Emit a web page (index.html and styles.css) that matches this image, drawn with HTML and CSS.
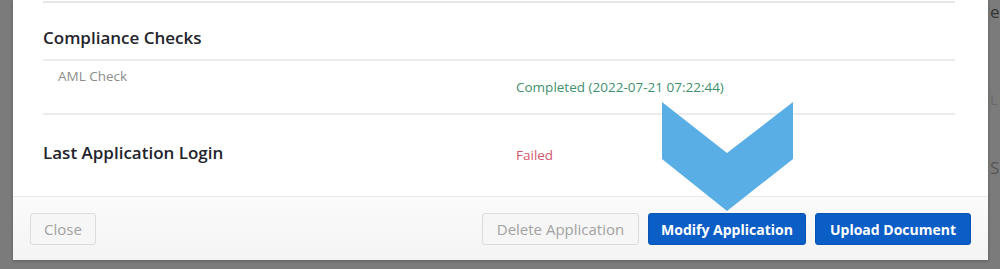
FILE: index.html
```html
<!DOCTYPE html>
<html>
<head>
<meta charset="utf-8">
<link rel="stylesheet" href="styles.css">
</head>
<body>
<div class="screen">
  <div class="side side-left"></div>
  <div class="modal">
    <div class="modal-body">
      <div class="top-rule"></div>
      <div class="section-head">Compliance Checks</div>
      <div class="row check-row">
        <div class="check-label">AML Check</div>
        <div class="check-value ok">Completed (2022-07-21 07:22:44)</div>
      </div>
      <div class="row login-row">
        <div class="section-title">Last Application Login</div>
        <div class="login-value fail">Failed</div>
      </div>
    </div>
    <div class="modal-footer">
      <button class="btn btn-light btn-close">Close</button>
      <div class="footer-right">
        <button class="btn btn-light btn-delete">Delete Application</button>
        <button class="btn btn-primary btn-modify">Modify Application</button>
        <button class="btn btn-primary btn-upload">Upload Document</button>
      </div>
    </div>
    <svg class="arrow" width="132" height="110" viewBox="0 0 132 110">
      <polygon points="0,0 65,51 131,0 131,57 65,109 0,57" fill="#5aaee6"/>
    </svg>
  </div>
  <div class="side side-right">
    <div class="ghost g1">e</div>
    <div class="ghost g2">L</div>
    <div class="ghost g3">S</div>
  </div>
</div>
</body>
</html>
```

FILE: styles.css
```css
* { box-sizing: border-box; }
html, body { margin: 0; padding: 0; }
body {
  background: #7b7b7b;
  font-family: "Open Sans", "Liberation Sans", sans-serif;
  width: 1000px;
  height: 269px;
  overflow: hidden;
}
.screen {
  display: flex;
  height: 269px;
  align-items: flex-start;
}
.side-left { width: 13px; flex: none; }
.modal {
  position: relative;
  width: 975px;
  height: 260px;
  background: #fff;
  display: flex;
  flex-direction: column;
  flex: none;
  box-shadow: 0 1px 3px rgba(0,0,0,0.25);
}
.modal-body {
  padding: 0 33px 0 30px;
  flex: 1;
}
.top-rule {
  height: 3px;
  border-bottom: 2px solid #e6e6e6;
}
.section-head {
  height: 58px;
  padding-top: 23px;
  font-size: 17px;
  font-weight: 600;
  color: #23242c;
  line-height: 24px;
  border-bottom: 2px solid #ececec;
}
.row {
  display: grid;
  grid-template-columns: 473px 1fr;
}
.check-row {
  height: 54px;
  border-bottom: 2px solid #ececec;
}
.check-label {
  padding: 6px 0 0 15px;
  font-size: 13.5px;
  color: #8c8c8c;
  line-height: 18px;
}
.check-value {
  padding-top: 17px;
  font-size: 13.5px;
  line-height: 18px;
}
.ok { color: #3f8f6f; }
.fail { color: #d4566b; }
.login-row {
  height: 79px;
}
.section-title {
  padding-top: 26px;
  font-size: 17px;
  font-weight: 600;
  color: #23242c;
  line-height: 24px;
}
.login-value {
  padding-top: 31px;
  font-size: 13.5px;
  line-height: 18px;
}
.modal-footer {
  height: 64px;
  border-top: 1px solid #eaeaea;
  background: linear-gradient(#fbfbfb, #f4f4f4);
  display: flex;
  align-items: flex-start;
  justify-content: space-between;
  padding: 16px 17px 0 17px;
}
.footer-right {
  display: flex;
  gap: 9px;
}
.btn {
  height: 32px;
  font-family: "Open Sans", "Liberation Sans", sans-serif;
  font-size: 14px;
  padding: 0;
  border-radius: 3px;
  cursor: pointer;
  text-align: center;
}
.btn-close { width: 66px; }
.btn-delete { width: 157px; }
.btn-modify { width: 158px; }
.btn-upload { width: 156px; }
.btn-light {
  background: #f6f6f6;
  border: 1px solid #dcdcdc;
  color: #a2a2a2;
  font-size: 15px;
}
.btn-primary {
  background: #0b5ec6;
  border: 1px solid #0a55b4;
  color: #fff;
  font-weight: 700;
}
.arrow {
  position: absolute;
  left: 649px;
  top: 102px;
}
.side-right {
  flex: 1;
  height: 269px;
  overflow: hidden;
  padding-left: 2px;
}
.ghost {
  white-space: nowrap;
  font-size: 17px;
  line-height: 22px;
  color: #3a3a3a;
}
.g1 { margin-top: 1px; color: #333; }
.g2 { margin-top: 66px; color: #6a6a6a; font-size: 14px; }
.g3 { margin-top: 46px; color: #555; }
```
